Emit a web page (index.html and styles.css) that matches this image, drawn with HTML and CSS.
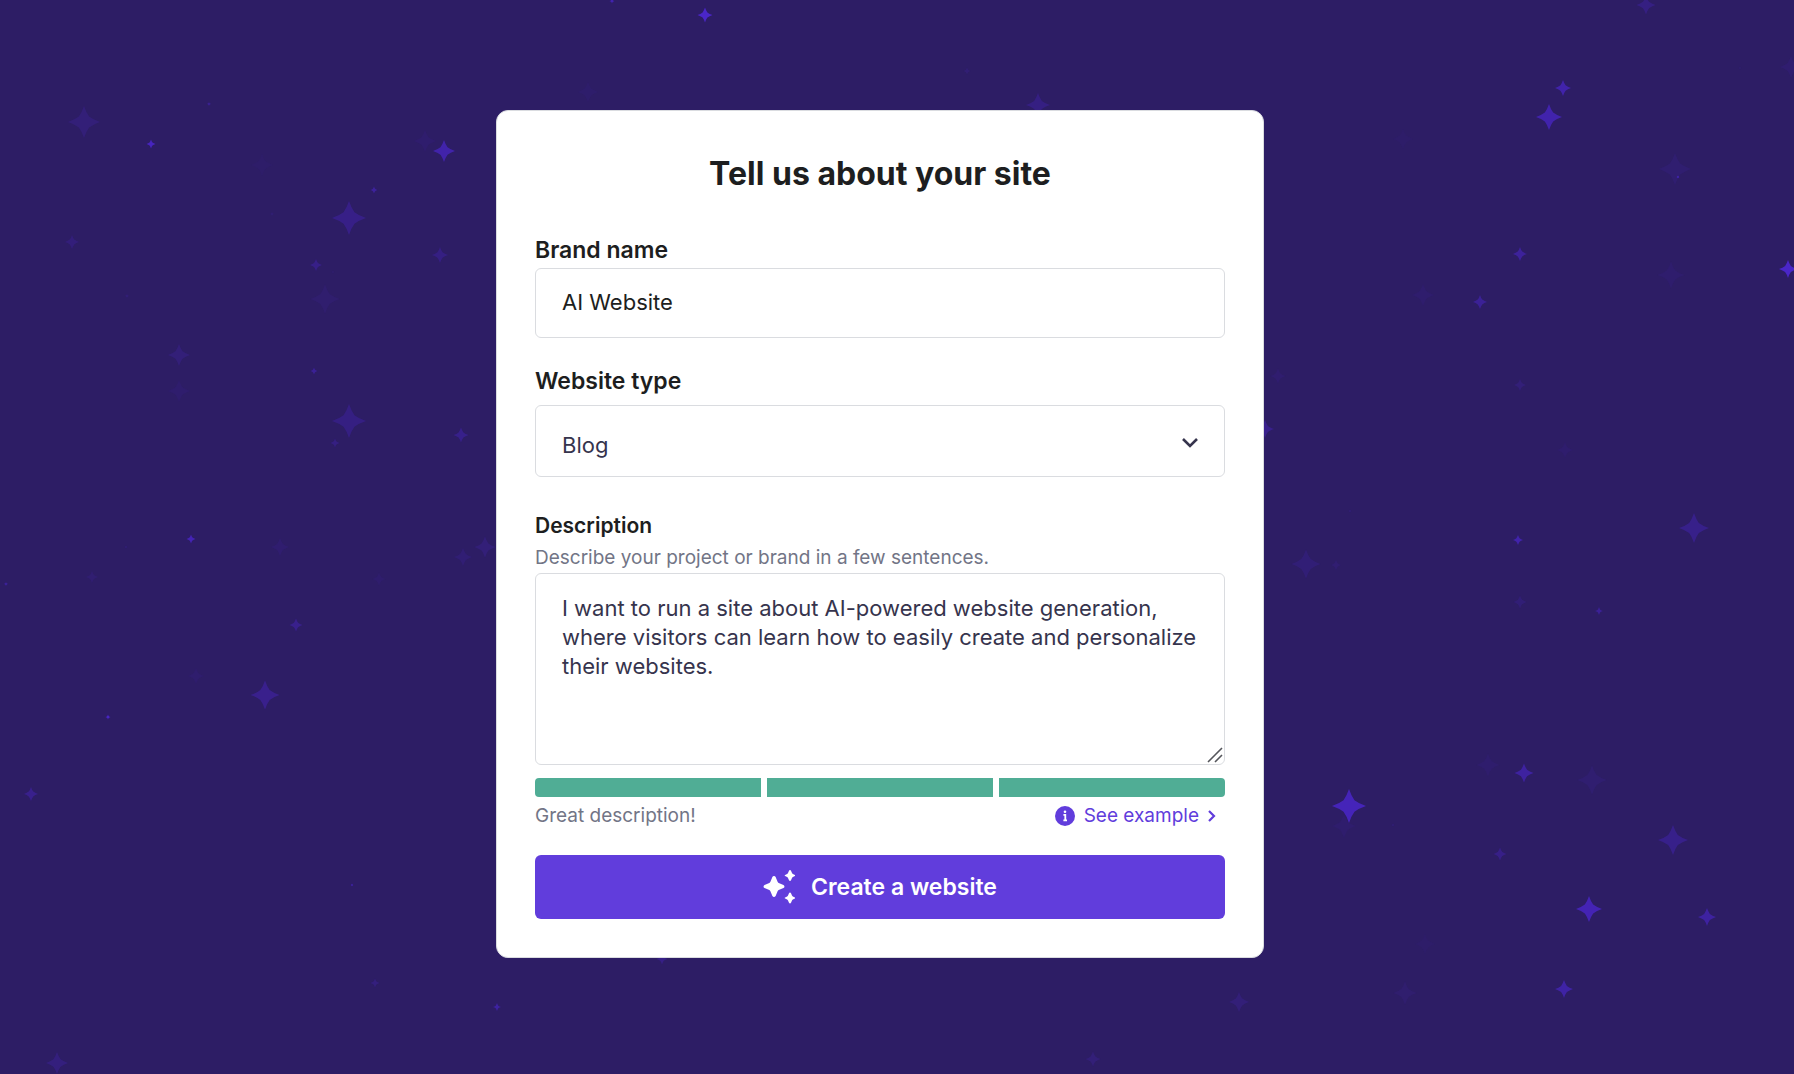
FILE: index.html
```html
<!DOCTYPE html>
<html lang="en">
<head>
<meta charset="utf-8">
<meta name="viewport" content="width=device-width, initial-scale=1">
<title>Tell us about your site</title>
<link rel="stylesheet" href="styles.css">
</head>
<body>
<svg class="sky" viewBox="0 0 1794 1074" preserveAspectRatio="xMidYMid slice" aria-hidden="true">
  <defs>
    <path id="star" d="M0-50Q7-29 16-17Q29-7 50 0Q29 7 16 17Q7 29 0 50Q-7 29-16 17Q-29 7-50 0Q-29-7-16-17Q-7-29 0-50Z"/>
  </defs>
</svg>
<main class="page">
  <form class="card">
    <h1 class="title">Tell us about your site</h1>

    <div class="field">
      <label class="label" for="brand">Brand name</label>
      <input class="control" id="brand" type="text" value="AI Website">
    </div>

    <div class="field field-type">
      <label class="label" for="type">Website type</label>
      <div class="select-wrap">
        <select class="control select" id="type">
          <option>Blog</option>
          <option>Business</option>
          <option>Portfolio</option>
        </select>
        <svg class="select-arrow" viewBox="0 0 18 12" aria-hidden="true"><path d="M2 2l7 7 7-7"/></svg>
      </div>
    </div>

    <div class="field field-description">
      <label class="label label-small" for="description">Description</label>
      <p class="hint" id="hint">Describe your project or brand in a few sentences.</p>
      <div class="textarea-wrap">
        <textarea class="control textarea" id="description" aria-describedby="hint">I want to run a site about AI-powered website generation, where visitors can learn how to easily create and personalize their websites.</textarea>
        <svg class="grip" viewBox="0 0 16 16" aria-hidden="true"><path d="M1 15L15 1M8 15l7-7"/></svg>
      </div>
    </div>

    <div class="meter">
      <span class="meter-part"></span>
      <span class="meter-part"></span>
      <span class="meter-part"></span>
    </div>
    <div class="feedback">
      <p class="hint">Great description!</p>
      <a class="example" href="#example">
        <svg class="info" viewBox="0 0 20 20" aria-hidden="true"><circle cx="10" cy="10" r="10"/><path d="M8.400 8.800h1.900v5.800M8.400 14.300h3.600"/><circle class="info-dot" cx="10" cy="5.800" r="1.300"/></svg>
        See example
        <svg class="chevron" viewBox="0 0 8 14" aria-hidden="true"><path d="M1 2l5 5-5 5"/></svg>
      </a>
    </div>

    <button class="submit" type="submit">
      <svg class="sparkles" viewBox="0 0 32 34" aria-hidden="true">
        <path d="M11 6c.8 0 1.300.3 1.600 1l2 4.800c.3.6.5.8 1.100 1.100l4.800 2c1.300.7 1.300 2.500 0 3.200l-4.800 2c-.6.3-.8.5-1.100 1.100l-2 4.800c-.7 1.300-2.500 1.300-3.200 0l-2-4.800c-.3-.6-.5-.8-1.100-1.100l-4.800-2c-1.300-.7-1.300-2.500 0-3.200l4.800-2c.6-.3.8-.5 1.100-1.100l2-4.800c.3-.7.8-1 1.600-1z"/>
        <path d="M27 0c.5 0 .8.3 1 .8l1 2.200c.1.500.4.800.9 1l2 .9c.6.300.6.900 0 1.200l-2 .9c-.5.200-.8.500-.9 1l-1 2.200c-.4.900-1.600.9-2 0l-1-2.200c-.1-.5-.4-.8-.9-1l-2-.9c-.6-.3-.6-.9 0-1.200l2-.9c.5-.2.8-.5.9-1l1-2.200c.2-.5.5-.8 1-.8z"/>
        <path d="M27 22.500c.5 0 .8.3 1 .8l1 2.200c.1.500.4.800.9 1l2 .9c.6.300.6.900 0 1.200l-2 .9c-.5.200-.8.500-.9 1l-1 2.200c-.4.900-1.600.9-2 0l-1-2.200c-.1-.5-.4-.8-.9-1l-2-.9c-.6-.3-.6-.9 0-1.200l2-.9c.5-.2.8-.5.9-1l1-2.200c.2-.5.5-.8 1-.8z"/>
      </svg>
      Create a website
    </button>
  </form>
</main>
<script src="stars.js"></script>
</body>
</html>
```
FILE: styles.css
```css
*,
*::before,
*::after {
  box-sizing: border-box;
}

body {
  margin: 0;
  min-height: 100vh;
  background: #2d1d65;
  color: #1d1e20;
  font-family: Inter, "Liberation Sans", sans-serif;
  font-size: 22px;
  line-height: 28px;
}

.sky {
  position: fixed;
  inset: 0;
  width: 100%;
  height: 100%;
  fill: #4a26c8;
}

.page {
  position: relative;
  display: flex;
  justify-content: center;
  padding: 110px 34px 110px 0;
}

.card {
  width: 100%;
  max-width: 768px;
  padding: 43px 38px 38px;
  border: 1px solid #dadce0;
  border-radius: 12px;
  background: #fff;
}

.title {
  margin: 0 0 42px;
  font-size: 32px;
  font-weight: 700;
  line-height: 40px;
  text-align: center;
}

.field {
  display: flex;
  flex-direction: column;
  gap: 4px;
}

.field-type {
  gap: 10px;
  margin-top: 29px;
}

.field-description {
  gap: 0;
  margin-top: 35px;
}

.label {
  font-size: 23px;
  font-weight: 600;
}

.label-small {
  font-size: 21px;
}

.hint {
  margin: 0;
  color: #727586;
  font-size: 19px;
}

.field-description .hint {
  margin: 4px 0 1px;
}

.control {
  display: block;
  width: 100%;
  height: 70px;
  margin: 0;
  padding: 0 26px 2px;
  border: 1px solid #dadce0;
  border-radius: 6px;
  background: #fff;
  color: #1d1e20;
  font: inherit;
}

.select-wrap,
.textarea-wrap {
  position: relative;
}

.select {
  height: 72px;
  padding: 8px 26px 0;
  color: #36344d;
  appearance: none;
}

.select-arrow {
  position: absolute;
  top: 32px;
  right: 26px;
  width: 18px;
  height: 12px;
  fill: none;
  stroke: #36344d;
  stroke-width: 2.6;
  pointer-events: none;
}

.textarea {
  height: 192px;
  padding: 20px 20px 20px 26px;
  color: #36344d;
  line-height: 29px;
  resize: none;
}

.grip {
  position: absolute;
  right: 2px;
  bottom: 2px;
  width: 16px;
  height: 16px;
  fill: none;
  stroke: #55565c;
  stroke-width: 1.6;
  pointer-events: none;
}

.meter {
  display: flex;
  gap: 6px;
  height: 19px;
  margin-top: 13px;
  border-radius: 4px;
  overflow: hidden;
}

.meter-part {
  flex: 1;
  background: #50ad95;
}

.feedback {
  display: flex;
  justify-content: space-between;
  margin: 5px 0 25px;
}

.example {
  display: flex;
  align-items: center;
  gap: 9px;
  padding-right: 9px;
  color: #613ddc;
  font-size: 19px;
  text-decoration: none;
}

.info {
  width: 20px;
  height: 20px;
  fill: #613ddc;
}

.info path {
  fill: none;
  stroke: #fff;
  stroke-width: 1.8;
}

.info .info-dot {
  fill: #fff;
}

.chevron {
  width: 8px;
  height: 14px;
  fill: none;
  stroke: #613ddc;
  stroke-width: 2.2;
}

.submit {
  display: flex;
  align-items: center;
  justify-content: center;
  gap: 16px;
  width: 100%;
  height: 64px;
  padding: 0;
  border: 0;
  border-radius: 6px;
  background: #613ddc;
  color: #fff;
  font: inherit;
  font-size: 23px;
  font-weight: 600;
  cursor: pointer;
}

.sparkles {
  width: 32px;
  height: 34px;
  fill: #fff;
}
```
FILE: stars.js
```js
// Each star: centre x, centre y, width, opacity.
const stars = [
  [84, 122, 32, .2], [209, 104, 4, .5], [151, 144, 9, .9], [425, 141, 22, .09],
  [444, 151, 22, .7], [262, 165, 22, .05], [374, 190, 7, .55], [272, 214, 4, .15],
  [349, 218, 34, .35], [72, 242, 14, .22], [440, 255, 16, .3], [316, 265, 12, .35],
  [333, 272, 3, .1], [325, 299, 29, .1], [127, 296, 4, .2], [179, 355, 22, .2],
  [179, 391, 22, .08], [314, 371, 7, .5], [349, 421, 34, .3], [335, 443, 9, .3],
  [461, 435, 15, .38], [191, 539, 9, .8], [126, 547, 3, .2], [6, 584, 4, .6],
  [92, 577, 12, .13], [280, 547, 18, .11], [379, 579, 13, .08], [463, 557, 18, .16],
  [485, 547, 21, .2], [296, 625, 13, .4], [196, 676, 16, .08], [265, 695, 29, .4],
  [108, 717, 5, 1], [31, 794, 14, .4], [352, 885, 3, .8], [375, 983, 9, .25],
  [57, 1063, 22, .25], [497, 1007, 8, .6],
  [1646, 5, 19, .3], [1563, 88, 16, .7], [1549, 117, 26, .72], [1403, 139, 20, .05],
  [1675, 169, 32, .12], [1678, 177, 3, 1], [1791, 67, 22, .11], [1520, 254, 14, .55],
  [1480, 302, 14, .5], [1671, 275, 27, .08], [1788, 269, 18, 1], [1423, 295, 22, .08],
  [1278, 376, 15, .11], [1520, 385, 12, .2], [1265, 429, 18, .4], [1565, 450, 16, .08],
  [1350, 511, 3, .2], [1740, 68, 3, .1], [1694, 528, 30, .38],
  [1518, 540, 10, .7], [1306, 564, 29, .18], [1336, 565, 10, .13], [1520, 602, 13, .18],
  [1599, 611, 8, .5], [1488, 765, 23, .08], [1524, 773, 19, .6], [1592, 780, 29, .12],
  [1344, 826, 24, .08], [1349, 806, 34, .85], [1393, 825, 3, .2], [1500, 854, 13, .35],
  [1673, 840, 30, .38], [1589, 909, 26, .8], [1707, 917, 18, .6], [1425, 944, 20, .05],
  [1564, 989, 18, .65], [1405, 993, 23, .1],
  [612, 1, 5, .8], [705, 15, 15, 1], [588, 92, 20, .07], [967, 71, 7, .15],
  [1038, 105, 24, .3], [662, 959, 11, .35], [1239, 1002, 20, .2], [1093, 1059, 15, .2]
];

const sky = document.querySelector(".sky");
for (const [x, y, size, opacity] of stars) {
  const star = document.createElementNS("http://www.w3.org/2000/svg", "use");
  star.setAttribute("href", "#star");
  star.setAttribute("transform", `translate(${x} ${y}) scale(${size / 100})`);
  star.setAttribute("opacity", opacity);
  sky.append(star);
}
```
